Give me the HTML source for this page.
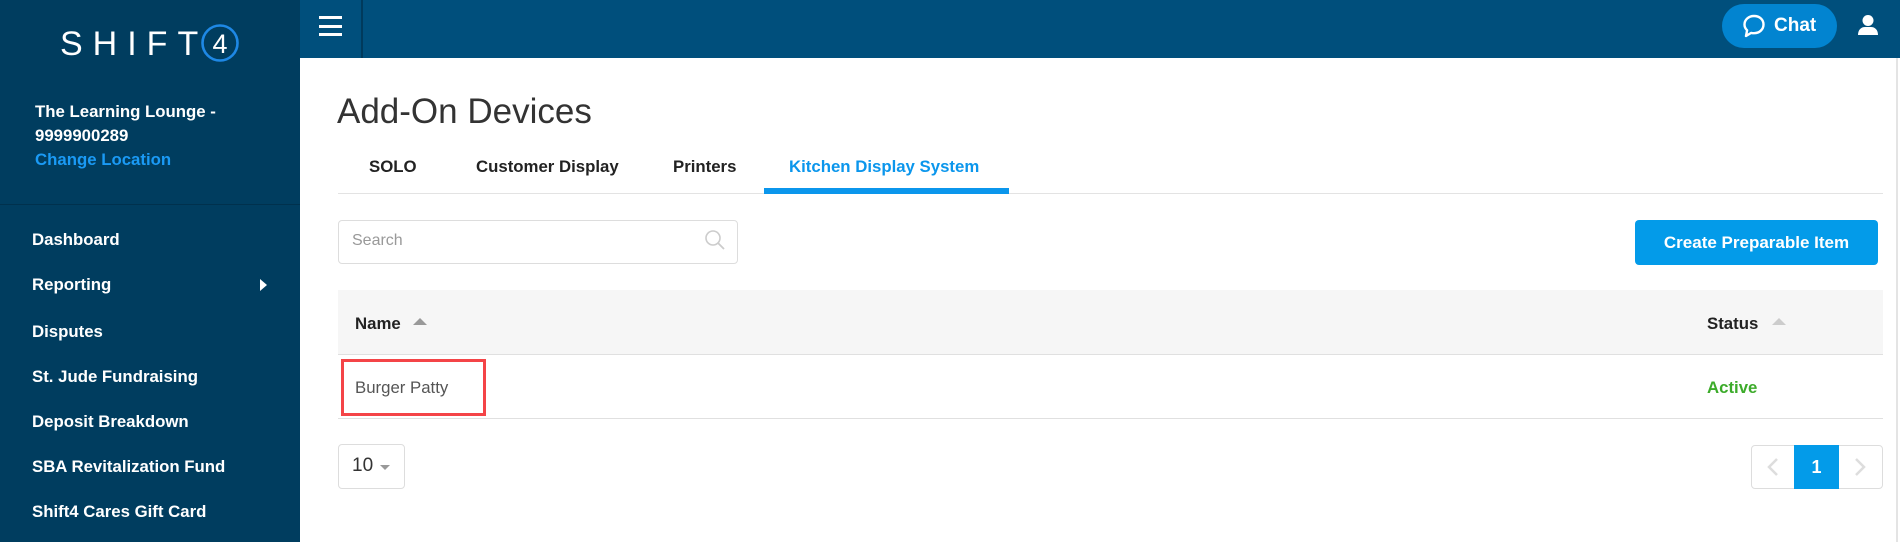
<!DOCTYPE html>
<html><head><meta charset="utf-8"><style>
*{margin:0;padding:0;box-sizing:border-box}
body{width:1900px;height:542px;overflow:hidden;background:#fff;font-family:"Liberation Sans",sans-serif;position:relative}
.a{position:absolute;white-space:nowrap}
.side{left:0;top:0;width:300px;height:542px;background:#003d5f}
.top{left:300px;top:0;width:1600px;height:58px;background:#004f7c}
.nav{left:32px;color:#fff;font-weight:bold;font-size:16.8px}
.tab{top:157px;font-weight:bold;font-size:16.8px;color:#222}
</style></head><body>
<div class="a side"></div>
<div class="a top"></div>
<div class="a" style="left:361px;top:0;width:2px;height:58px;background:#003a5c"></div>
<div class="a" style="left:319px;top:16px;width:23px;height:3px;background:#fff"></div>
<div class="a" style="left:319px;top:25px;width:23px;height:3px;background:#fff"></div>
<div class="a" style="left:319px;top:33px;width:23px;height:3px;background:#fff"></div>
<!-- logo -->
<div class="a" style="left:60px;top:25px;color:#fff;font-size:34px;letter-spacing:10px;font-weight:normal">SHIFT</div>
<svg class="a" style="left:198px;top:21px" width="46" height="46"><circle cx="22" cy="22" r="17.5" fill="none" stroke="#1e88e5" stroke-width="2.6"/><text x="22" y="32" text-anchor="middle" fill="#fff" font-family="Liberation Sans" font-size="27">4</text></svg>
<div class="a" style="left:35px;top:100px;color:#fff;font-weight:bold;font-size:16.8px;line-height:24px">The Learning Lounge -<br>9999900289<br><span style="color:#1a9af5">Change Location</span></div>
<div class="a" style="left:0;top:204px;width:300px;height:1px;background:#00314d"></div>
<div class="a nav" style="top:230px">Dashboard</div>
<div class="a nav" style="top:275px">Reporting</div>
<svg class="a" style="left:259px;top:278px" width="10" height="14"><path d="M1 1L8 7L1 13Z" fill="#fff"/></svg>
<div class="a nav" style="top:322px">Disputes</div>
<div class="a nav" style="top:367px">St. Jude Fundraising</div>
<div class="a nav" style="top:412px">Deposit Breakdown</div>
<div class="a nav" style="top:457px">SBA Revitalization Fund</div>
<div class="a nav" style="top:502px">Shift4 Cares Gift Card</div>
<!-- topbar right -->
<div class="a" style="left:1722px;top:4px;width:115px;height:44px;border-radius:22px;background:#0284d0"></div>
<svg class="a" style="left:1741px;top:13px" width="26" height="26"><path d="M13 3C7.5 3 3.5 6.8 3.5 11.5c0 2.3 1 4.3 2.6 5.8L5 23l5.2-3.1c.9.2 1.8.3 2.8.3 5.5 0 9.5-3.8 9.5-8.7S18.5 3 13 3z" fill="none" stroke="#fff" stroke-width="2.4" stroke-linejoin="round"/></svg>
<div class="a" style="left:1774px;top:15px;color:#fff;font-weight:bold;font-size:19px">Chat</div>
<svg class="a" style="left:1857px;top:14px" width="22" height="22"><circle cx="11" cy="6.5" r="5.5" fill="#fff"/><path d="M1 21c0-5 3-8 7-8h6c4 0 7 3 7 8z" fill="#fff"/></svg>
<div class="a" style="left:1896px;top:58px;width:2px;height:484px;background:#e4e4e4"></div>
<!-- content -->
<div class="a" style="left:337px;top:92px;font-size:35px;color:#333;font-weight:normal">Add-On Devices</div>
<div class="a tab" style="left:369px">SOLO</div>
<div class="a tab" style="left:476px">Customer Display</div>
<div class="a tab" style="left:673px">Printers</div>
<div class="a tab" style="left:789px;color:#0b96ec">Kitchen Display System</div>
<div class="a" style="left:338px;top:193px;width:1545px;height:1px;background:#e3e3e3"></div>
<div class="a" style="left:764px;top:188px;width:245px;height:6px;background:#0b96ec"></div>
<div class="a" style="left:338px;top:220px;width:400px;height:44px;border:1px solid #ddd;border-radius:4px"></div>
<div class="a" style="left:352px;top:232px;font-size:16px;color:#999">Search</div>
<svg class="a" style="left:703px;top:228px" width="24" height="24"><circle cx="10" cy="10" r="7" fill="none" stroke="#ccc" stroke-width="1.6"/><path d="M15 15l6 6" stroke="#ccc" stroke-width="1.8"/></svg>
<div class="a" style="left:1635px;top:220px;width:243px;height:45px;background:#039be9;border-radius:4px;color:#fff;font-weight:bold;font-size:17px;text-align:center;line-height:45px">Create Preparable Item</div>
<div class="a" style="left:338px;top:290px;width:1545px;height:65px;background:#f6f6f6;border-bottom:1px solid #e0e0e0"></div>
<div class="a" style="left:355px;top:314px;font-weight:bold;font-size:16.8px;color:#222">Name</div>
<svg class="a" style="left:413px;top:318px" width="14" height="8"><path d="M0 7L7 0L14 7Z" fill="#999"/></svg>
<div class="a" style="left:1707px;top:314px;font-weight:bold;font-size:16.8px;color:#222">Status</div>
<svg class="a" style="left:1772px;top:318px" width="14" height="8"><path d="M0 7L7 0L14 7Z" fill="#ccc"/></svg>
<div class="a" style="left:338px;top:418px;width:1545px;height:1px;background:#e0e0e0"></div>
<div class="a" style="left:341px;top:359px;width:145px;height:57px;border:3px solid #f44447"></div>
<div class="a" style="left:355px;top:378px;font-size:16.8px;color:#555">Burger Patty</div>
<div class="a" style="left:1707px;top:378px;font-weight:bold;font-size:16.8px;color:#3cab2a">Active</div>
<div class="a" style="left:338px;top:444px;width:67px;height:45px;border:1px solid #ddd;border-radius:4px"></div>
<div class="a" style="left:352px;top:455px;font-size:19px;color:#333">10</div>
<svg class="a" style="left:380px;top:465px" width="10" height="6"><path d="M0 0H10L5 5Z" fill="#999"/></svg>
<div class="a" style="left:1751px;top:445px;width:132px;height:44px;border:1px solid #ddd;border-radius:4px"></div>
<div class="a" style="left:1794px;top:445px;width:45px;height:44px;background:#039be9;color:#fff;font-weight:bold;font-size:18px;text-align:center;line-height:44px">1</div>
<svg class="a" style="left:1767px;top:458px" width="12" height="18"><path d="M10 1L2 9L10 17" fill="none" stroke="#ddd" stroke-width="2.5"/></svg>
<svg class="a" style="left:1854px;top:458px" width="12" height="18"><path d="M2 1L10 9L2 17" fill="none" stroke="#ddd" stroke-width="2.5"/></svg>
</body></html>
